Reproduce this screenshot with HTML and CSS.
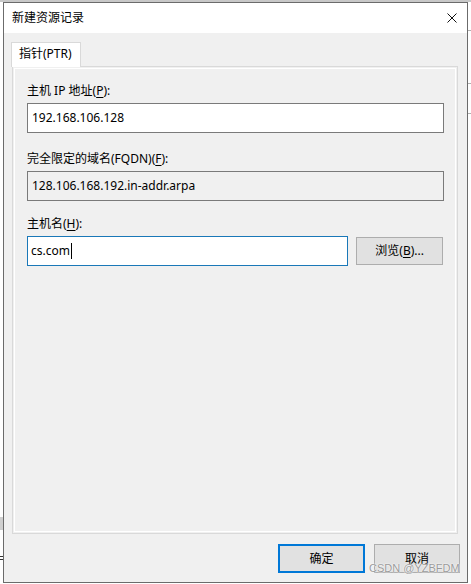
FILE: index.html
```html
<!DOCTYPE html>
<html lang="zh-CN">
<head>
<meta charset="utf-8">
<title>新建资源记录</title>
<link rel="stylesheet" href="styles.css">
</head>
<body>
<div class="desktop">
  <!-- bits of the window underneath -->
  <div class="under under-top"></div>
  <div class="under under-band"></div>
  <div class="under under-line l1"></div>
  <div class="under under-line l2"></div>
  <div class="under under-rline r1"></div>
  <div class="under under-rline r2"></div>
  <div class="under under-rline r3"></div>

  <div class="window">
    <div class="titlebar">
      <span class="title">新建资源记录</span>
      <svg class="close" width="10" height="10" viewBox="0 0 10 10">
        <path d="M0.5 0.5 L9.5 9.5 M9.5 0.5 L0.5 9.5" stroke="#111" stroke-width="1" fill="none"/>
      </svg>
    </div>

    <div class="body">
      <div class="tabs">
        <div class="tab">指针(PTR)</div>
      </div>
      <div class="panel">
        <div class="label">主机 IP 地址(<u>P</u>):</div>
        <div class="field">192.168.106.128</div>

        <div class="label gap">完全限定的域名(FQDN)(<u>F</u>):</div>
        <div class="field readonly">128.106.168.192.in-addr.arpa</div>

        <div class="label gap2">主机名(<u>H</u>):</div>
        <div class="row">
          <div class="field focus">cs.com<span class="caret"></span></div>
          <div class="btn browse">浏览(<u>B</u>)...</div>
        </div>
      </div>
      <div class="actions">
        <div class="btn ok">确定</div>
        <div class="btn cancel">取消</div>
      </div>
    </div>
  </div>

  <div class="mark">CSDN @YZBFDM</div>
</div>
</body>
</html>
```

FILE: styles.css
```css
* {
  box-sizing: border-box;
}

html, body {
  margin: 0;
  padding: 0;
  background: #ffffff;
}

body {
  font-family: "Noto Sans", "Noto Sans CJK SC", sans-serif;
  font-size: 12px;
  color: #000;
}

.desktop {
  position: relative;
  width: 471px;
  height: 584px;
  overflow: hidden;
  background: #ffffff;
}

.under {
  position: absolute;
}

.under-top {
  left: 0;
  top: 0;
  width: 471px;
  height: 2px;
  background: #c8c8c8;
}

.under-band {
  left: 0;
  top: 517px;
  width: 3px;
  height: 13px;
  background: #cfcfcf;
}

.under-line {
  left: 0;
  width: 3px;
  height: 1px;
  background: #333;
}

.l1 { top: 556px; }
.l2 { top: 559px; }

.under-rline {
  left: 468px;
  width: 3px;
  height: 1px;
  background: #b0b0b0;
}

.r1 { top: 30px; }
.r2 { top: 83px; }
.r3 { top: 113px; }

/* dialog window */
.window {
  position: absolute;
  left: 3px;
  top: 2px;
  width: 465px;
  height: 581px;
  border: 1px solid #6b6b6b;
  background: #f0f0f0;
  display: flex;
  flex-direction: column;
}

.titlebar {
  height: 30px;
  flex: none;
  background: #ffffff;
  display: flex;
  align-items: center;
  justify-content: space-between;
  padding: 0 10px 0 8px;
}

.title {
  line-height: 16px;
}

.close {
  display: block;
}

.body {
  flex: 1;
  display: flex;
  flex-direction: column;
  padding: 9px 7px 9px 0;
}

.tabs {
  display: flex;
  padding-left: 7px;
  height: 24px;
  flex: none;
}

.tab {
  width: 70px;
  height: 25px;
  background: #ffffff;
  border: 1px solid #d9d9d9;
  border-bottom: none;
  padding: 3px 0 0 7px;
  line-height: 16px;
  position: relative;
  z-index: 1;
}

.panel {
  height: 468px;
  flex: none;
  margin-left: 8px;
  margin-right: 2px;
  border: 1px solid #d9d9d9;
  box-shadow: inset 0 0 0 1px #f0f0f0, inset 0 0 0 2px #ffffff;
  padding: 16px 14px 0 14px;
}

.label {
  line-height: 16px;
  height: 16px;
  margin-bottom: 4px;
}

.label u {
  text-decoration-thickness: 1px;
  text-underline-offset: 2px;
}

.gap {
  margin-top: 18px;
}

.gap2 {
  margin-top: 15px;
}

.field {
  width: 417px;
  height: 30px;
  border: 1px solid #7a7a7a;
  background: #ffffff;
  padding: 0 4px;
  line-height: 26px;
  display: flex;
  align-items: center;
}

.field.readonly {
  background: #f0f0f0;
}

.row {
  display: flex;
  align-items: center;
  gap: 8px;
}

.field.focus {
  width: 322px;
  border-color: #1a78b8;
  padding-left: 3px;
}

.caret {
  display: inline-block;
  width: 1px;
  height: 16px;
  background: #000;
  margin-left: 1px;
}

.btn {
  background: #e1e1e1;
  border: 1px solid #adadad;
  display: flex;
  align-items: center;
  justify-content: center;
  line-height: 16px;
}

.btn u {
  text-underline-offset: 2px;
}

.browse {
  width: 87px;
  height: 28px;
}

.actions {
  display: flex;
  justify-content: flex-end;
  gap: 9px;
  margin-top: 10px;
}

.ok {
  width: 87px;
  height: 29px;
  border: 2px solid #0078d7;
}

.cancel {
  width: 86px;
  height: 29px;
}

.mark {
  position: absolute;
  left: 369px;
  top: 562px;
  font-family: "Liberation Sans", Arial, sans-serif;
  font-size: 11px;
  line-height: 13px;
  color: #9a9a9a;
  text-shadow: 0 0 2px #ffffff, 0 0 1px #ffffff;
}
```
